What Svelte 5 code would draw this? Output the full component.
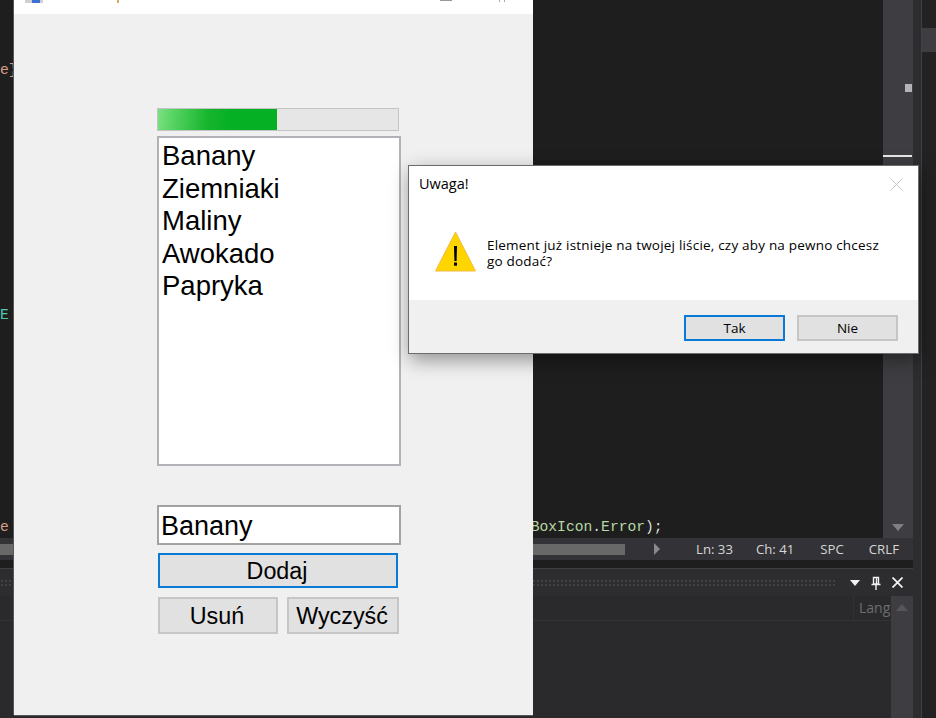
<script lang="ts">
	const items = ['Banany', 'Ziemniaki', 'Maliny', 'Awokado', 'Papryka'];
	const progress = 49.6;
	const gap = (n: number) => ' '.repeat(n);
</script>

<div class="ide">
	<div class="main">
		<div class="editor">
			<div class="code">
				<div class="line"><span class="str">e&#125;</span></div>
				<div class="skip-a"></div>
				<div class="line"> <span class="type">E</span></div>
				<div class="skip-b"></div>
				<div class="line"><span class="str">e</span>{gap(59)}<span class="enum nudge">BoxIcon</span><span class="plain">.</span><span class="enum">Error</span><span class="plain">);</span></div>
			</div>
			<div class="vscroll">
				<div class="marker"></div>
				<div class="caret-line"></div>
				<svg class="scroll-down" width="12" height="7" viewBox="0 0 12 7" aria-hidden="true">
					<path d="M0 0H12L6 7Z" fill="#7f7f84" />
				</svg>
			</div>
		</div>

		<div class="status">
			<div class="hscroll">
				<div class="hthumb"></div>
				<svg class="hscroll-right" width="6" height="12" viewBox="0 0 6 12" aria-hidden="true">
					<path d="M0 0L6 6L0 12Z" fill="#8a8a8e" />
				</svg>
			</div>
			<span class="stat ln">Ln: 33</span>
			<span class="stat ch">Ch: 41</span>
			<span class="stat spc">SPC</span>
			<span class="stat crlf">CRLF</span>
		</div>

		<div class="panel">
			<div class="panel-head">
				<div class="grip"></div>
				<svg width="10" height="6" viewBox="0 0 10 6" aria-hidden="true">
					<path d="M0 0H10L5 6Z" fill="#f1f1f1" />
				</svg>
				<svg width="10" height="14" viewBox="0 0 10 14" aria-hidden="true">
					<path d="M2.5 1.5H7.5V8H2.5ZM5.5 1.5V8M0.5 8.5H9.5M5 9V14" fill="none" stroke="#f1f1f1" stroke-width="1.4" />
				</svg>
				<svg width="11" height="11" viewBox="0 0 11 11" aria-hidden="true">
					<path d="M0.5 0.5L10.5 10.5M10.5 0.5L0.5 10.5" stroke="#f1f1f1" stroke-width="1.8" />
				</svg>
			</div>
			<div class="panel-body">
				<div class="grid-area">
					<div class="grid-head"><span class="lang">Lang</span></div>
				</div>
				<div class="panel-scroll">
					<svg width="12" height="7" viewBox="0 0 12 7" aria-hidden="true">
						<path d="M0 7H12L6 0Z" fill="#55555a" />
					</svg>
				</div>
			</div>
		</div>
	</div>

	<div class="side-rail"></div>
	<div class="side">
		<div class="side-tab"></div>
	</div>
</div>

<div class="app-window">
	<div class="titlebar">
		<span class="app-icon"><i></i></span>
		<span class="title-caret"></span>
		<span class="min-btn"></span>
		<span class="tick one"></span>
		<span class="tick"></span>
	</div>
	<div class="form">
		<div class="progress">
			<div class="progress-fill" style="width: {progress}%"></div>
		</div>
		<div class="listbox">
			{#each items as item}
				<div>{item}</div>
			{/each}
		</div>
		<div class="textbox">Banany</div>
		<button class="btn primary" type="button">Dodaj</button>
		<div class="btn-row">
			<button class="btn remove" type="button">Usuń</button>
			<button class="btn clear" type="button">Wyczyść</button>
		</div>
	</div>
</div>

<div class="dialog">
	<div class="dialog-top">
		<div class="dialog-title">
			<span>Uwaga!</span>
			<svg width="13" height="13" viewBox="0 0 13 13" aria-hidden="true">
				<path d="M0.5 0.5L12.5 12.5M12.5 0.5L0.5 12.5" stroke="#c4c4c4" stroke-width="1" />
			</svg>
		</div>
		<div class="dialog-body">
			<svg width="41" height="41" viewBox="0 0 41 41" aria-hidden="true">
				<path d="M20.5 1L40.5 40H0.5Z" fill="#ffd500" stroke="#f5b942" stroke-width="1" stroke-linejoin="round" />
				<path d="M19 15H22L21.6 30H19.4Z" fill="#000" />
				<rect x="19" y="31.5" width="3" height="3.2" fill="#000" />
			</svg>
			<p>Element już istnieje na twojej liście, czy aby na pewno chcesz go dodać?</p>
		</div>
	</div>
	<div class="dialog-foot">
		<button class="dlg-btn default" type="button">Tak</button>
		<button class="dlg-btn" type="button">Nie</button>
	</div>
</div>

<style>
	:global(body) {
		margin: 0;
		overflow: hidden;
		background: #252526;
	}

	.ide {
		display: flex;
		width: 936px;
		height: 718px;
		overflow: hidden;
	}

	.main {
		width: 913px;
		display: flex;
		flex-direction: column;
		background: #1e1e1e;
	}

	.editor {
		display: flex;
		height: 538px;
	}

	.code {
		width: 883px;
		padding-top: 61px;
		background: #1e1e1e;
		font-family: "Liberation Mono", monospace;
		font-size: 14.67px;
		color: #dcdcdc;
		overflow: hidden;
	}

	.line { height: 19px; line-height: 19px; white-space: pre; }
	.skip-a { height: 226px; }
	.skip-b { height: 193px; }
	.str { color: #d69d85; }
	.type { color: #4ec9b0; }
	.enum { color: #b8d7a3; }
	.nudge { margin-left: 3px; }
	.plain { color: #dcdcdc; }

	.vscroll {
		width: 30px;
		display: flex;
		flex-direction: column;
		align-items: center;
		padding-top: 84px;
		box-sizing: border-box;
		background: #3e3e42;
	}

	.marker {
		align-self: flex-end;
		width: 7px;
		height: 8px;
		margin-right: 1px;
		background: #b4b4b4;
	}

	.caret-line {
		width: 29px;
		height: 2px;
		margin-top: 63px;
		align-self: flex-start;
		background: #e8e8e8;
	}

	.scroll-down { margin-top: auto; margin-bottom: 7px; }

	.status {
		display: flex;
		align-items: center;
		height: 22px;
		background: #333337;
		color: #d6d6d6;
		font-family: "Open Sans", sans-serif;
		font-size: 13.2px;
	}

	.hscroll {
		width: 660px;
		display: flex;
		align-items: center;
	}

	.hthumb {
		width: 625px;
		height: 11px;
		background: #686868;
	}

	.hscroll-right { margin-left: 29px; }

	.stat { white-space: nowrap; }
	.ln { margin-left: 36px; }
	.ch { margin-left: 23px; }
	.spc { margin-left: 26px; }
	.crlf { margin-left: 25px; }

	.panel {
		margin-top: 8px;
		flex: 1;
		display: flex;
		flex-direction: column;
		border-top: 1px solid #3f3f46;
		background: #2a2a2c;
		min-height: 0;
	}

	.panel-head {
		height: 27px;
		display: flex;
		align-items: center;
		gap: 11px;
		padding-right: 10px;
		background: #2d2d30;
	}

	.grip {
		flex: 1;
		height: 8px;
		margin-right: 4px;
		background-image: radial-gradient(circle, #424246 1px, transparent 1px);
		background-size: 4px 4px;
	}

	.panel-body {
		flex: 1;
		display: flex;
	}

	.grid-area { flex: 1; }

	.grid-head {
		height: 24px;
		display: flex;
		justify-content: flex-end;
		border-bottom: 1px solid #323234;
		overflow: hidden;
	}

	.lang {
		width: 32px;
		padding-left: 5px;
		border-left: 1px solid #323234;
		color: #6d6d70;
		font-family: "Open Sans", sans-serif;
		font-size: 14px;
		line-height: 24px;
		overflow: hidden;
	}

	.panel-scroll {
		width: 22px;
		display: flex;
		justify-content: center;
		padding-top: 8px;
		box-sizing: border-box;
		background: #3e3e42;
	}

	.panel-scroll svg { display: block; }

	.side-rail {
		width: 8px;
		background: #2d2d30;
		border-right: 1px solid #3f3f46;
	}

	.side {
		flex: 1;
		padding-top: 28px;
		background: #222223;
	}

	.side-tab {
		height: 24px;
		background: #3e3e42;
	}

	/* windows sitting on the desktop */
	.app-window {
		position: absolute;
		left: 14px;
		top: 0;
		width: 519px;
		height: 715px;
		background: #f0f0f0;
		box-shadow: -1px 0 0 #55555a, 0 1px 0 #55555a;
		font-family: "Liberation Sans", Arial, sans-serif;
		color: #000;
	}

	.titlebar {
		height: 14px;
		display: flex;
		align-items: flex-start;
		background: #fff;
	}

	.app-icon {
		width: 18px;
		height: 3px;
		margin-left: 11px;
		background: #d0d0d0;
	}

	.app-icon i {
		display: block;
		width: 8px;
		height: 3px;
		margin-left: 7px;
		background: #3f6fd0;
	}

	.title-caret {
		width: 2px;
		height: 3px;
		margin-left: 74px;
		background: #d9a66f;
	}

	.min-btn {
		width: 12px;
		height: 1px;
		margin-left: 321px;
		background: #999;
	}

	.tick {
		width: 1px;
		height: 2px;
		margin-left: 4px;
		background: #aaa;
	}

	.tick.one { margin-left: 47px; }

	.form {
		width: 244px;
		margin-left: 143px;
		padding-top: 94px;
	}

	.progress {
		width: 240px;
		height: 21px;
		border: 1px solid #c4c4c4;
		background: #e6e6e6;
	}

	.progress-fill {
		height: 100%;
		background: linear-gradient(97deg, #7be083 0%, #55d361 14%, #17b52e 42%, #06b025 60%);
	}

	.listbox {
		width: 234px;
		height: 324px;
		margin-top: 5px;
		padding: 2px 3px 0;
		border: 2px solid #b0b2b6;
		background: #fff;
		font-size: 27.5px;
		line-height: 32.5px;
	}

	.textbox {
		width: 238px;
		height: 36px;
		margin-top: 39px;
		padding-left: 2px;
		border: 2px solid #a3a3a3;
		background: #fff;
		font-size: 27px;
		line-height: 38px;
	}

	.btn {
		display: block;
		padding: 1px 2px 0 0;
		border: 2px solid #c6c6c6;
		background: #e1e1e1;
		color: #000;
		font-family: inherit;
		font-size: 23.3px;
		box-sizing: border-box;
	}

	.btn.primary {
		width: 240px;
		height: 35px;
		margin: 8px 0 0 1px;
		border-color: #0a7ad6;
		line-height: 31px;
	}

	.btn-row {
		display: flex;
		gap: 9px;
		margin: 9px 0 0 1px;
	}

	.remove { width: 120px; height: 37px; }
	.clear { width: 112px; height: 37px; }

	.dialog {
		position: absolute;
		left: 408px;
		top: 165px;
		width: 511px;
		height: 189px;
		box-sizing: border-box;
		display: flex;
		flex-direction: column;
		border: 1px solid #6c6c6c;
		background: #fff;
		box-shadow: 2px 6px 18px rgba(0, 0, 0, 0.4);
		font-family: "Open Sans", sans-serif;
		color: #000;
	}

	.dialog-top {
		flex: 1;
	}

	.dialog-title {
		display: flex;
		align-items: center;
		justify-content: space-between;
		padding: 8px 15px 0 10px;
		font-size: 14.5px;
		line-height: 20px;
	}

	.dialog-body {
		display: flex;
		align-items: flex-start;
		gap: 11px;
		margin-top: 29px;
		padding-left: 26px;
	}

	.dialog-body svg { flex: none; margin-top: 8px; }

	.dialog-body p {
		width: 395px;
		margin: 0;
		padding-top: 14px;
		font-size: 13.5px;
		letter-spacing: 0.2px;
		line-height: 16px;
	}

	.dialog-foot {
		height: 53px;
		display: flex;
		justify-content: flex-end;
		gap: 12px;
		padding: 15px 20px 0 0;
		box-sizing: border-box;
		background: #f0f0f0;
	}

	.dlg-btn {
		width: 101px;
		height: 26px;
		padding: 0;
		border: 2px solid #c6c6c6;
		background: #e1e1e1;
		color: #000;
		font-family: inherit;
		font-size: 13.5px;
	}

	.dlg-btn.default { border-color: #0a7ad6; }
</style>
